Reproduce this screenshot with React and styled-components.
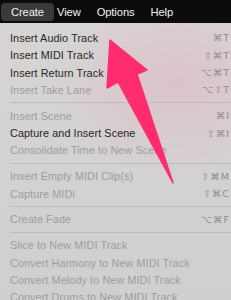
import React from "react";
import styled, { createGlobalStyle } from "styled-components";

const GlobalStyle = createGlobalStyle`
  html, body {
    margin: 0;
    padding: 0;
    width: 231px;
    height: 300px;
    overflow: hidden;
    background: #d2d0d0;
  }
  body {
    font-family: "Liberation Sans", "Inter", sans-serif;
    -webkit-font-smoothing: antialiased;
  }
`;

const sections = [
  [
    { label: "Insert Audio Track", keys: "⌘T" },
    { label: "Insert MIDI Track", keys: "⇧⌘T" },
    { label: "Insert Return Track", keys: "⌥⌘T" },
    { label: "Insert Take Lane", keys: "⌥⇧T", disabled: true },
  ],
  [
    { label: "Insert Scene", keys: "⌘I", disabled: true },
    { label: "Capture and Insert Scene", keys: "⇧⌘I" },
    { label: "Consolidate Time to New Scene", disabled: true },
  ],
  [
    { label: "Insert Empty MIDI Clip(s)", keys: "⇧⌘M", disabled: true },
    { label: "Capture MIDI", keys: "⇧⌘C", disabled: true },
  ],
  [{ label: "Create Fade", keys: "⌥⌘F", disabled: true }],
  [
    { label: "Slice to New MIDI Track", disabled: true },
    { label: "Convert Harmony to New MIDI Track", disabled: true },
    { label: "Convert Melody to New MIDI Track", disabled: true },
    { label: "Convert Drums to New MIDI Track", disabled: true },
  ],
];

const Screen = styled.div`
  position: relative;
  width: 231px;
  height: 300px;
  overflow: hidden;
`;

const MenuBar = styled.div`
  display: flex;
  align-items: center;
  height: 23px;
  padding: 0 1px;
  background: #0b0b0b;
`;

const BarItem = styled.div`
  height: 18px;
  padding: ${(p) => (p.$active ? "0 10px 0 10px" : "0 8px")};
  margin-right: ${(p) => (p.$active ? "-5px" : "0")};
  display: flex;
  align-items: center;
  border-radius: 4px;
  background: ${(p) => (p.$active ? "#3a3a3a" : "transparent")};
  color: #f2f2f2;
  font-size: 11.2px;
  letter-spacing: -0.1px;
`;

const Menu = styled.div`
  width: 244px;
  padding-top: 6.3px;
  background:
    radial-gradient(ellipse 120px 90px at 175px 60px, rgba(226, 180, 195, 0.55), rgba(226, 180, 195, 0) 100%),
    linear-gradient(180deg, #d7d4d4 0%, #d0cfcf 100%);
  min-height: 277px;
`;

const Row = styled.div`
  height: 17.3px;
  display: flex;
  align-items: center;
  justify-content: space-between;
  padding: 0 14px 0 10px;
  font-size: 10.8px;
  letter-spacing: 0.1px;
  color: ${(p) => (p.$disabled ? "#9d9c9d" : "#262626")};
  white-space: nowrap;
`;

const Keys = styled.span`
  color: #8e8d8e;
  font-family: "DejaVu Sans", sans-serif;
  font-size: 9.5px;
  letter-spacing: 1px;
`;

const Separator = styled.div`
  height: 8.6px;
  display: flex;
  align-items: center;
  padding-left: 10px;
  &::after {
    content: "";
    flex: 1;
    height: 1px;
    background: #bcbaba;
  }
`;

const Arrow = styled.svg`
  position: absolute;
  left: 0;
  top: 0;
  pointer-events: none;
`;

export default function App() {
  return (
    <>
      <GlobalStyle />
      <Screen>
        <MenuBar>
          <BarItem $active>Create</BarItem>
          <BarItem>View</BarItem>
          <BarItem>Options</BarItem>
          <BarItem>Help</BarItem>
        </MenuBar>
        <Menu>
          {sections.map((items, i) => (
            <React.Fragment key={i}>
              {i > 0 && <Separator />}
              {items.map((item) => (
                <Row key={item.label} $disabled={item.disabled}>
                  <span>{item.label}</span>
                  {item.keys && <Keys>{item.keys}</Keys>}
                </Row>
              ))}
            </React.Fragment>
          ))}
        </Menu>
        <Arrow width="231" height="300" viewBox="0 0 231 300">
          <path
            d="M110 40 L147 70 L137 74 L173 183 L118 82 L107 88 Z"
            fill="#ff2d6e"
            stroke="#ff2d6e"
            strokeWidth="1.5"
            strokeLinejoin="round"
          />
        </Arrow>
      </Screen>
    </>
  );
}
